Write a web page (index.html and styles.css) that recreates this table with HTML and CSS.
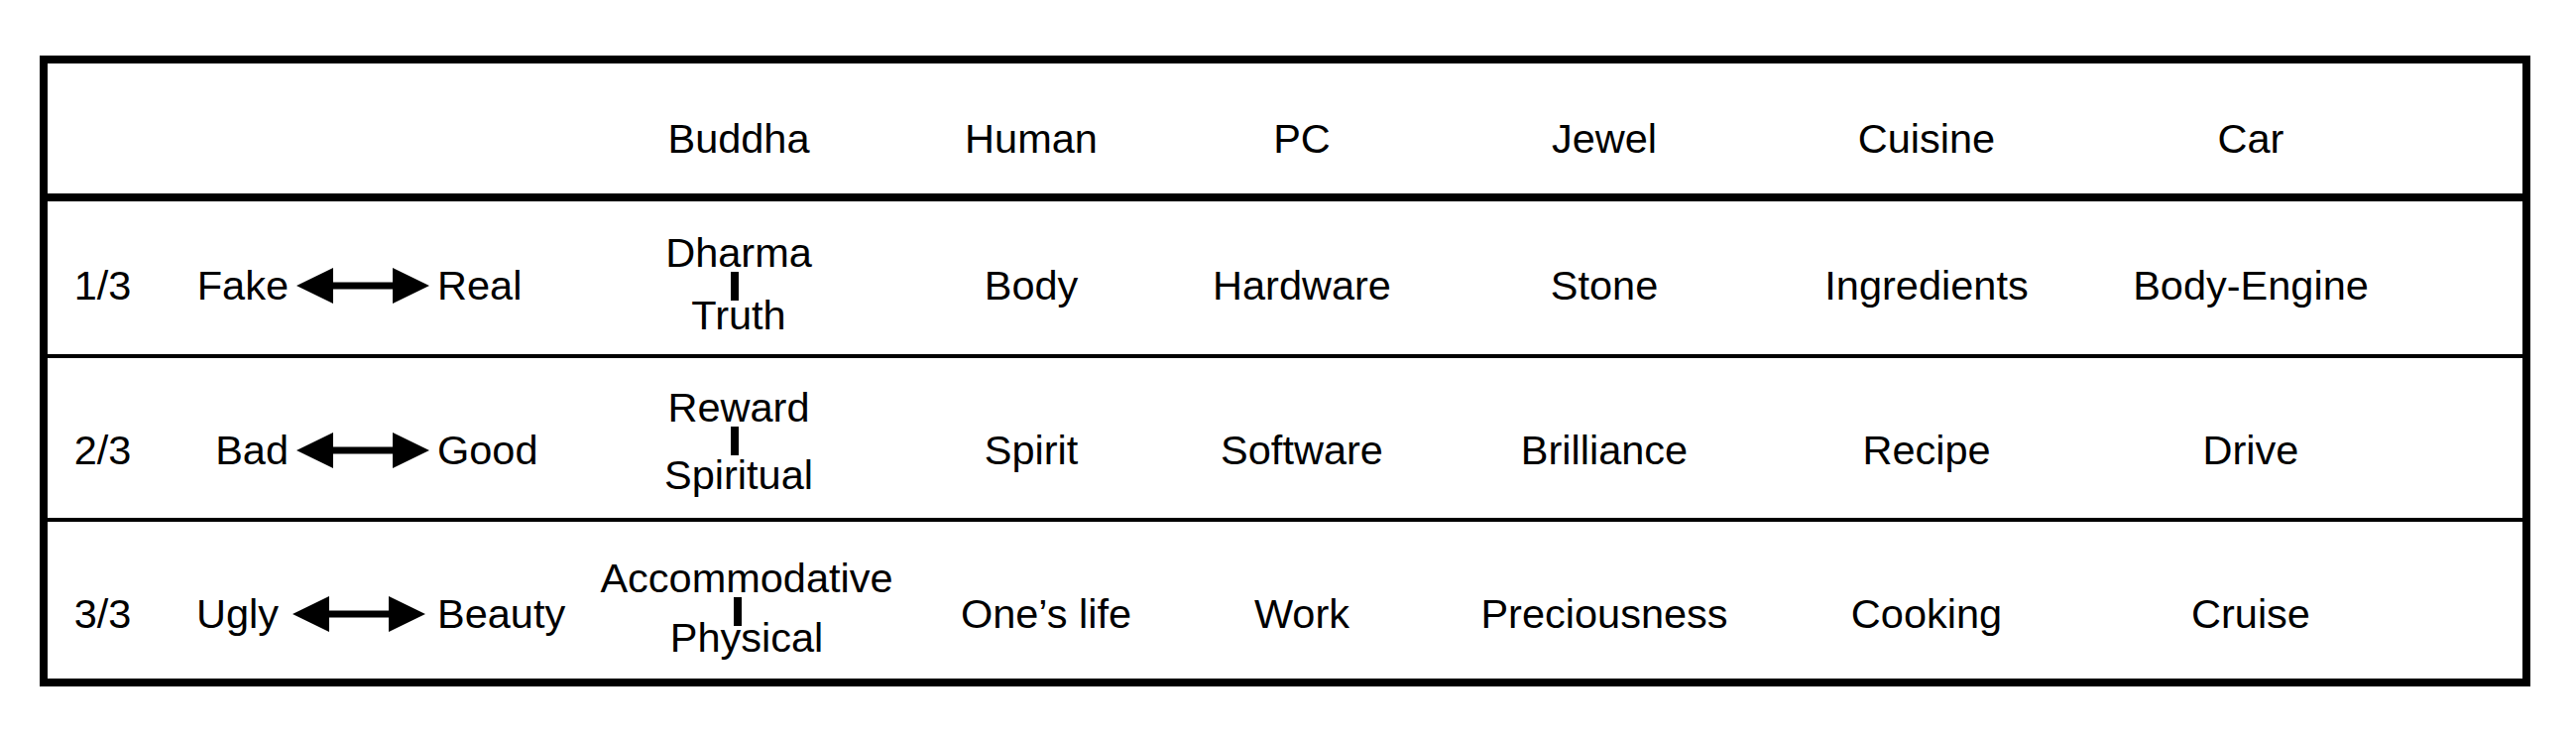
FILE: index.html
```html
<!DOCTYPE html>
<html lang="en">
<head>
<meta charset="utf-8">
<title>Table</title>
<link rel="stylesheet" href="styles.css">
</head>
<body>
<div class="table">
  <div class="row head">
    <div class="cell"></div>
    <div class="cell"></div>
    <div class="cell">Buddha</div>
    <div class="cell">Human</div>
    <div class="cell">PC</div>
    <div class="cell">Jewel</div>
    <div class="cell">Cuisine</div>
    <div class="cell">Car</div>
    <div class="cell"></div>
  </div>
  <div class="row r1">
    <div class="cell">1/3</div>
    <div class="cell scale">
      <span class="lt">Fake</span>
      <svg class="arrow" viewBox="0 0 134 36" width="134" height="36"><polygon points="0,18 37,0 37,14.5 97,14.5 97,0 134,18 97,36 97,21.5 37,21.5 37,36"/></svg>
      <span class="rt">Real</span>
    </div>
    <div class="cell"><div class="pair g63"><span>Dharma</span><i class="bar"></i><span class="second">Truth</span></div></div>
    <div class="cell">Body</div>
    <div class="cell">Hardware</div>
    <div class="cell">Stone</div>
    <div class="cell">Ingredients</div>
    <div class="cell">Body-Engine</div>
    <div class="cell"></div>
  </div>
  <div class="row r2">
    <div class="cell">2/3</div>
    <div class="cell scale">
      <span class="lt">Bad</span>
      <svg class="arrow" viewBox="0 0 134 36" width="134" height="36"><polygon points="0,18 37,0 37,14.5 97,14.5 97,0 134,18 97,36 97,21.5 37,21.5 37,36"/></svg>
      <span class="rt">Good</span>
    </div>
    <div class="cell"><div class="pair g68"><span>Reward</span><i class="bar"></i><span class="second">Spiritual</span></div></div>
    <div class="cell">Spirit</div>
    <div class="cell">Software</div>
    <div class="cell">Brilliance</div>
    <div class="cell">Recipe</div>
    <div class="cell">Drive</div>
    <div class="cell"></div>
  </div>
  <div class="row r3">
    <div class="cell">3/3</div>
    <div class="cell scale tight">
      <span class="lt">Ugly</span>
      <svg class="arrow" viewBox="0 0 134 36" width="134" height="36"><polygon points="0,18 37,0 37,14.5 97,14.5 97,0 134,18 97,36 97,21.5 37,21.5 37,36"/></svg>
      <span class="rt">Beauty</span>
    </div>
    <div class="cell"><div class="pair g60 wide"><span>Accommodative</span><i class="bar"></i><span class="second">Physical</span></div></div>
    <div class="cell nudge">One’s life</div>
    <div class="cell">Work</div>
    <div class="cell">Preciousness</div>
    <div class="cell">Cooking</div>
    <div class="cell">Cruise</div>
    <div class="cell"></div>
  </div>
</div>
</body>
</html>
```

FILE: styles.css
```css
html, body {
  margin: 0;
  background: #fff;
}
body {
  padding: 56px 0 0 40px;
  font-family: "Liberation Sans", Arial, Helvetica, sans-serif;
  font-size: 41.5px;
  line-height: 48px;
  color: #000;
}
.table {
  box-sizing: border-box;
  width: 2512px;
  height: 636px;
  border: 8px solid #000;
  display: flex;
  flex-direction: column;
}
.row {
  box-sizing: border-box;
  display: grid;
  grid-template-columns: 111px 441px 290px 300px 246px 364px 286px 368px 90px;
  align-items: center;
}
.head { height: 139px; border-bottom: 8px solid #000; padding-top: 21px; }
.r1 { height: 158px; border-bottom: 4px solid #000; padding-top: 15px; }
.r2 { height: 165px; border-bottom: 4px solid #000; padding-top: 24px; }
.r3 { height: 158px; padding-top: 27px; }
.cell {
  display: flex;
  justify-content: center;
  align-items: center;
  white-space: nowrap;
}
.nudge { padding-left: 30px; }
.scale {
  display: grid;
  grid-template-columns: 132px 134px 1fr;
  column-gap: 8px;
  align-items: center;
}
.tight { grid-template-columns: 128px 134px 1fr; }
.tight .lt { padding-right: 6px; }
.tight .rt { padding-left: 4px; }
.lt { text-align: right; }
.rt { text-align: left; }
.arrow { display: block; fill: #000; }
.pair {
  display: flex;
  flex-direction: column;
  align-items: center;
}
.bar {
  display: block;
  width: 8px;
  height: 29px;
  background: #000;
  margin-top: -5px;
  margin-left: -8px;
}
.g63 { margin-bottom: 3px; }
.g63 .second { margin-top: -9px; }
.g68 { margin-bottom: 18px; }
.g68 .second { margin-top: -4px; }
.g60 { margin-bottom: 12px; }
.g60 .second { margin-top: -12px; }
.wide { margin-left: 16px; }
.wide .bar { margin-left: -18px; }
```
